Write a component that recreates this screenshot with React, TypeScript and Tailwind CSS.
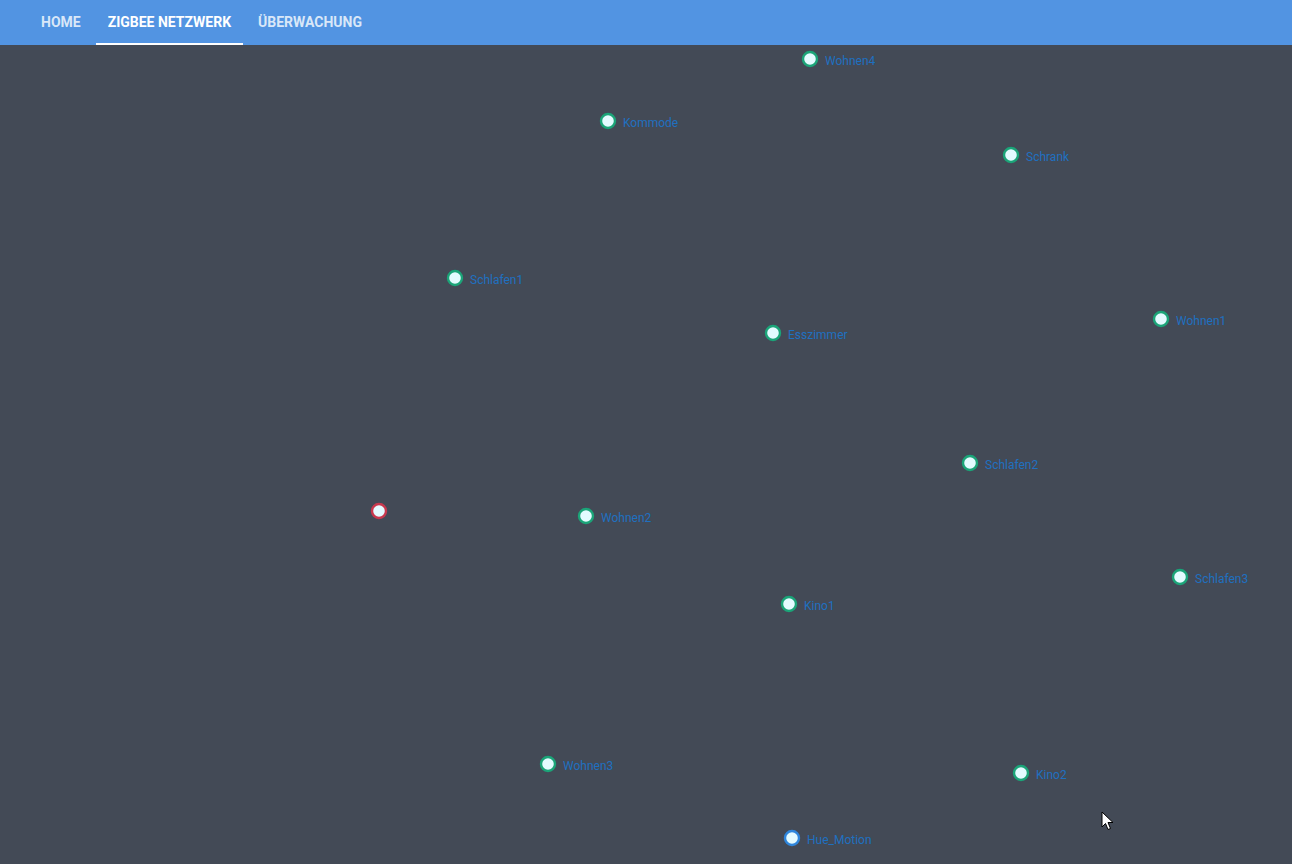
import React from "react";

type Node = { id: string; x: number; y: number; label?: string; kind: "router" | "coordinator" | "end" };

const nodes: Node[] = [
  { id: "w4", x: 810, y: 59, label: "Wohnen4", kind: "router" },
  { id: "ko", x: 608, y: 121, label: "Kommode", kind: "router" },
  { id: "sc", x: 1011, y: 155, label: "Schrank", kind: "router" },
  { id: "s1", x: 455, y: 278, label: "Schlafen1", kind: "router" },
  { id: "ez", x: 773, y: 333, label: "Esszimmer", kind: "router" },
  { id: "w1", x: 1161, y: 319, label: "Wohnen1", kind: "router" },
  { id: "s2", x: 970, y: 463, label: "Schlafen2", kind: "router" },
  { id: "co", x: 379, y: 511, kind: "coordinator" },
  { id: "w2", x: 586, y: 516, label: "Wohnen2", kind: "router" },
  { id: "s3", x: 1180, y: 577, label: "Schlafen3", kind: "router" },
  { id: "k1", x: 789, y: 604, label: "Kino1", kind: "router" },
  { id: "w3", x: 548, y: 764, label: "Wohnen3", kind: "router" },
  { id: "k2", x: 1021, y: 773, label: "Kino2", kind: "router" },
  { id: "hm", x: 792, y: 838, label: "Hue_Motion", kind: "end" },
];

const strokeFor = {
  router: "#1aa478",
  coordinator: "#c8394e",
  end: "#2f86dc",
};

function NavTab({ label, active }: { label: string; active?: boolean }) {
  return (
    <div
      className={
        "relative h-full flex items-center px-3 text-[14px] font-bold " +
        (active ? "text-white" : "text-[#d9e7f8]")
      }
    >
      {label}
      {active && <div className="absolute left-0 right-0 bottom-0 h-[2px] bg-white" />}
    </div>
  );
}

export default function App() {
  return (
    <div
      className="w-[1292px] h-[864px] bg-[#434a56] flex flex-col overflow-hidden"
      style={{ fontFamily: "Roboto, 'Liberation Sans', sans-serif" }}
    >
      <nav className="h-[45px] bg-[#5294e2] flex items-stretch gap-[3px] pl-[29px] shrink-0">
        <NavTab label="HOME" />
        <NavTab label="ZIGBEE NETZWERK" active />
        <NavTab label="ÜBERWACHUNG" />
      </nav>
      <div className="relative flex-1">
        <svg className="absolute left-0 top-[-45px]" width={1292} height={864}>
          <defs>
            <filter id="glow" x="-50%" y="-50%" width="200%" height="200%">
              <feGaussianBlur stdDeviation="0.7" />
            </filter>
          </defs>
          {nodes.map((n) => (
            <g key={n.id}>
              <circle
                cx={n.x}
                cy={n.y}
                r={7}
                fill="#e4fbff"
                stroke={strokeFor[n.kind]}
                strokeWidth={2.4}
                filter="url(#glow)"
              />
              {n.label && (
                <text x={n.x + 15} y={n.y + 6} fontSize={12} fill="#1f70c0">
                  {n.label}
                </text>
              )}
            </g>
          ))}
        </svg>
        <svg className="absolute left-[1101px] top-[766px]" width={14} height={20} viewBox="0 0 14 20">
          <path d="M1 1 L1 16 L4.5 12.5 L7 18.5 L9.5 17.5 L7 11.5 L12 11.5 Z" fill="#fff" stroke="#000" strokeWidth={1} strokeLinejoin="round" />
        </svg>
      </div>
    </div>
  );
}
